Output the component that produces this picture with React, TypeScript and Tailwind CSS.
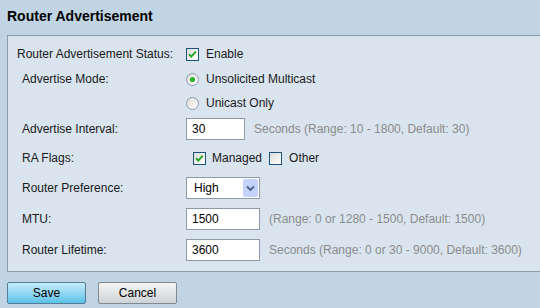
import React from 'react';

function CheckBox({ checked }: { checked: boolean }) {
  return (
    <svg width="13" height="13" viewBox="0 0 13 13" className="shrink-0">
      <defs>
        <linearGradient id="cbg" x1="0" y1="0" x2="1" y2="1">
          <stop offset="0" stopColor="#dcdcd7" />
          <stop offset="1" stopColor="#ffffff" />
        </linearGradient>
      </defs>
      <rect x="0.5" y="0.5" width="12" height="12" fill="url(#cbg)" stroke="#1c5180" />
      {checked && (
        <path d="M3 6.2 L5.2 8.6 L9.8 3.6" fill="none" stroke="#21a121" strokeWidth="1.8" />
      )}
    </svg>
  );
}

function Radio({ checked }: { checked: boolean }) {
  return (
    <svg width="13" height="13" viewBox="0 0 13 13" className="shrink-0">
      <defs>
        <linearGradient id="rbg" x1="0" y1="0" x2="1" y2="1">
          <stop offset="0" stopColor="#dcdcd7" />
          <stop offset="1" stopColor="#ffffff" />
        </linearGradient>
      </defs>
      <circle cx="6.5" cy="6.5" r="6" fill="url(#rbg)" stroke="#8a9aa8" />
      {checked && <circle cx="6.5" cy="6.5" r="2.6" fill="#2fb42f" />}
    </svg>
  );
}

function TextBox({ value, w }: { value: string; w: string }) {
  return (
    <div className={`${w} h-[22px] bg-white border border-[#8f9ca8] flex items-center px-[5px] text-black`}>
      {value}
    </div>
  );
}

function Row({ h, label, indent = true, children }: { h: string; label: string; indent?: boolean; children?: React.ReactNode }) {
  return (
    <div className={`${h} flex items-center`}>
      <div className={`w-[178px] ${indent ? 'pl-[14px]' : 'pl-[9px]'}`}>{label}</div>
      <div className="flex items-center">{children}</div>
    </div>
  );
}

export default function App() {
  return (
    <div
      className="w-[540px] h-[308px] bg-[#c1d4e4] text-[12px] text-[#1a1a1a] overflow-hidden"
      style={{ fontFamily: '"Liberation Sans", Arial, sans-serif' }}
    >
      <div className="h-[35px] flex items-center pl-[7px] pb-[3px]">
        <h1 className="text-[14px] font-bold text-black">Router Advertisement</h1>
      </div>

      <div className="ml-[7px] bg-[#d9e4ee] border-t border-l border-b border-[#8a9aa8] pt-[6px] pb-[5px]">
        <Row h="h-[24px]" label="Router Advertisement Status:" indent={false}>
          <CheckBox checked />
          <span className="ml-[7px]">Enable</span>
        </Row>
        <Row h="h-[26px]" label="Advertise Mode:">
          <Radio checked />
          <span className="ml-[7px]">Unsolicited Multicast</span>
        </Row>
        <Row h="h-[22px]" label="">
          <Radio checked={false} />
          <span className="ml-[7px]">Unicast Only</span>
        </Row>
        <Row h="h-[30px]" label="Advertise Interval:">
          <TextBox value="30" w="w-[59px]" />
          <span className="ml-[9px] text-[#8c8c8c]">Seconds (Range: 10 - 1800, Default: 30)</span>
        </Row>
        <Row h="h-[28px]" label="RA Flags:">
          <span className="ml-[7px]" />
          <CheckBox checked />
          <span className="ml-[6px]">Managed</span>
          <span className="ml-[7px]" />
          <CheckBox checked={false} />
          <span className="ml-[7px]">Other</span>
        </Row>
        <Row h="h-[32px]" label="Router Preference:">
          <div className="w-[74px] h-[22px] bg-white border border-[#8f9ca8] flex items-center pl-[7px] pr-[1px] text-black">
            <span className="flex-1">High</span>
            <div className="w-[15px] h-[18px] bg-[#c3d3fb] rounded-[2px] flex items-center justify-center">
              <svg width="9" height="7" viewBox="0 0 9 7">
                <path d="M1 1.5 L4.5 5 L8 1.5" fill="none" stroke="#4d6185" strokeWidth="1.8" />
              </svg>
            </div>
          </div>
        </Row>
        <Row h="h-[30px]" label="MTU:">
          <TextBox value="1500" w="w-[74px]" />
          <span className="ml-[9px] text-[#8c8c8c]">(Range: 0 or 1280 - 1500, Default: 1500)</span>
        </Row>
        <Row h="h-[32px]" label="Router Lifetime:">
          <TextBox value="3600" w="w-[74px]" />
          <span className="ml-[9px] text-[#8c8c8c]">Seconds (Range: 0 or 30 - 9000, Default: 3600)</span>
        </Row>
      </div>

      <div className="flex gap-[12px] pl-[7px] pt-[10px]">
        <button className="w-[79px] h-[22px] border border-[#557c95] rounded-[2px] bg-gradient-to-b from-[#c6ecfa] to-[#58c1e8] text-black">
          Save
        </button>
        <button className="w-[79px] h-[22px] border border-[#7f8a93] rounded-[2px] bg-gradient-to-b from-[#f4f4f4] to-[#cfd3d6] text-black">
          Cancel
        </button>
      </div>
    </div>
  );
}
